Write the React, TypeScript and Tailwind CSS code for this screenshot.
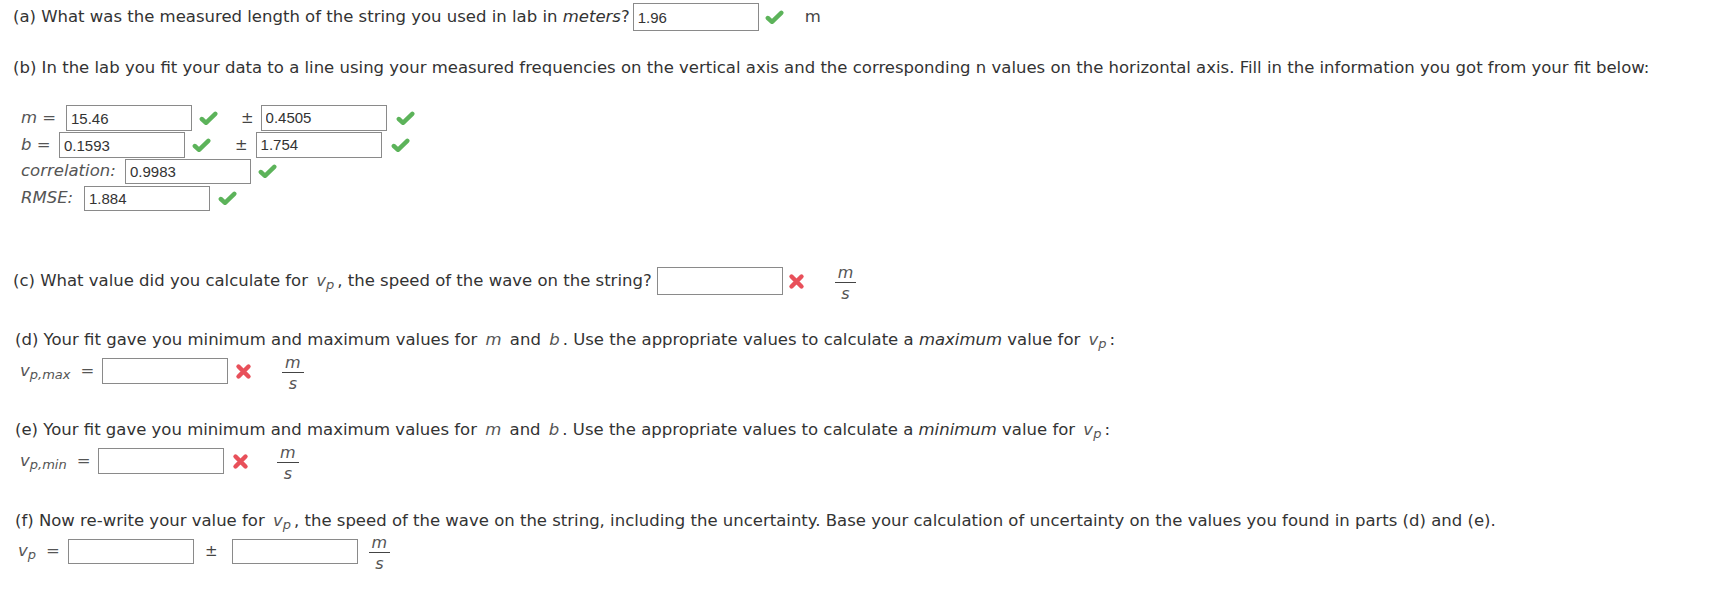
import React from 'react';

const body = "font-['DejaVu_Sans',Verdana,sans-serif] text-[16.5px] text-[#333]";

function Check() {
  return (
    <svg width="19" height="15" viewBox="0 0 19 15" className="shrink-0">
      <path d="M2.8 8 L7 11.8 L16.3 2.8" fill="none" stroke="#5cb35a" strokeWidth="4.4" strokeLinecap="round" strokeLinejoin="round" />
    </svg>
  );
}

function Cross() {
  return (
    <svg width="17" height="17" viewBox="0 0 17 17" className="shrink-0">
      <path d="M3.5 3.5 L13.5 13.5 M13.5 3.5 L3.5 13.5" fill="none" stroke="#e8505a" strokeWidth="4.4" strokeLinecap="round" />
    </svg>
  );
}

function Box({ value = '', h = 'h-[26px]' }: { value?: string; h?: string }) {
  return (
    <input
      readOnly
      value={value}
      className={`${h} w-[126px] shrink-0 border border-[#8a8a8a] bg-white px-[4px] font-['Liberation_Sans',Arial,sans-serif] text-[15px] text-[#333] outline-none`}
    />
  );
}

function Vp({ sub }: { sub: string }) {
  return (
    <i className="text-[#555]">
      v<sub className="text-[13px]">{sub}</sub>
    </i>
  );
}

function Frac() {
  return (
    <span className="inline-flex shrink-0 flex-col items-center leading-none text-[#555]">
      <i className="border-b border-[#444] px-[3px] pb-[1px] text-[16px]">m</i>
      <i className="pt-[3px] text-[16px]">s</i>
    </span>
  );
}

function Pm() {
  return <span className="shrink-0 text-[15px] text-[#444]">±</span>;
}

export default function App() {
  return (
    <main className={`min-h-screen bg-white px-[13px] pt-[3px] ${body}`}>
      {/* (a) */}
      <div className="flex h-[28px] items-center whitespace-nowrap">
        <span>(a) What was the measured length of the string you used in lab in <i>meters</i>?</span>
        <span className="ml-[3px]"><Box value="1.96" h="h-[28px]" /></span>
        <span className="ml-[6px]"><Check /></span>
        <span className="ml-[21px] text-[#444]">m</span>
      </div>

      {/* (b) */}
      <p className="mt-[27px] h-[20px] whitespace-nowrap leading-[20px]">
        (b) In the lab you fit your data to a line using your measured frequencies on the vertical axis and the corresponding n values on the horizontal axis. Fill in the information you got from your fit below:
      </p>

      <div className="mt-[27px] pl-[8px] text-[#555]">
        <div className="flex h-[26px] items-center">
          <i className="w-[45px] shrink-0">m =</i>
          <Box value="15.46" />
          <span className="ml-[7px]"><Check /></span>
          <span className="ml-[23px]"><Pm /></span>
          <span className="ml-[7px]"><Box value="0.4505" /></span>
          <span className="ml-[9px]"><Check /></span>
        </div>
        <div className="mt-[1px] flex h-[26px] items-center">
          <i className="w-[38px] shrink-0">b =</i>
          <Box value="0.1593" />
          <span className="ml-[7px]"><Check /></span>
          <span className="ml-[24px]"><Pm /></span>
          <span className="ml-[8px]"><Box value="1.754" /></span>
          <span className="ml-[9px]"><Check /></span>
        </div>
        <div className="mt-[1px] flex h-[25px] items-center">
          <i className="w-[104px] shrink-0 whitespace-nowrap">correlation:</i>
          <Box value="0.9983" h="h-[25px]" />
          <span className="ml-[7px]"><Check /></span>
        </div>
        <div className="mt-[2px] flex h-[25px] items-center">
          <i className="w-[63px] shrink-0">RMSE:</i>
          <Box value="1.884" h="h-[25px]" />
          <span className="ml-[8px]"><Check /></span>
        </div>
      </div>

      {/* (c) */}
      <div className="mt-[56px] flex h-[28px] items-center whitespace-nowrap">
        <span>
          (c) What value did you calculate for <span className="mx-[3px]"><Vp sub="p" /></span>, the speed of the wave on the string?
        </span>
        <span className="ml-[5px]"><Box h="h-[28px]" /></span>
        <span className="ml-[5px]"><Cross /></span>
        <span className="ml-[30px]"><Frac /></span>
      </div>

      {/* (d) */}
      <p className="mt-[35px] h-[20px] whitespace-nowrap pl-[2px] leading-[20px]">
        (d) Your fit gave you minimum and maximum values for <i className="mx-[3px] text-[#555]">m</i> and <i className="mx-[3px] text-[#555]">b</i>. Use the appropriate values to calculate a <i>maximum</i> value for <span className="mx-[3px]"><Vp sub="p" /></span>:
      </p>
      <div className="mt-[8px] flex h-[26px] items-center pl-[7px]">
        <span className="flex w-[82px] shrink-0 items-center gap-[10px] text-[#555]">
          <Vp sub="p,max" />
          <span>=</span>
        </span>
        <Box />
        <span className="ml-[7px]"><Cross /></span>
        <span className="ml-[30px]"><Frac /></span>
      </div>

      {/* (e) */}
      <p className="mt-[36px] h-[20px] whitespace-nowrap pl-[2px] leading-[20px]">
        (e) Your fit gave you minimum and maximum values for <i className="mx-[3px] text-[#555]">m</i> and <i className="mx-[3px] text-[#555]">b</i>. Use the appropriate values to calculate a <i>minimum</i> value for <span className="mx-[3px]"><Vp sub="p" /></span>:
      </p>
      <div className="mt-[8px] flex h-[26px] items-center pl-[7px]">
        <span className="flex w-[78px] shrink-0 items-center gap-[10px] text-[#555]">
          <Vp sub="p,min" />
          <span>=</span>
        </span>
        <Box />
        <span className="ml-[8px]"><Cross /></span>
        <span className="ml-[28px]"><Frac /></span>
      </div>

      {/* (f) */}
      <p className="mt-[37px] h-[20px] whitespace-nowrap pl-[2px] leading-[20px]">
        (f) Now re-write your value for <span className="mx-[3px]"><Vp sub="p" /></span>, the speed of the wave on the string, including the uncertainty. Base your calculation of uncertainty on the values you found in parts (d) and (e).
      </p>
      <div className="mt-[8px] flex h-[25px] items-center pl-[5px]">
        <span className="flex w-[50px] shrink-0 items-center gap-[10px] text-[#555]">
          <Vp sub="p" />
          <span>=</span>
        </span>
        <Box h="h-[25px]" />
        <span className="ml-[11px]"><Pm /></span>
        <span className="ml-[14px]"><Box h="h-[25px]" /></span>
        <span className="ml-[11px]"><Frac /></span>
      </div>
    </main>
  );
}
